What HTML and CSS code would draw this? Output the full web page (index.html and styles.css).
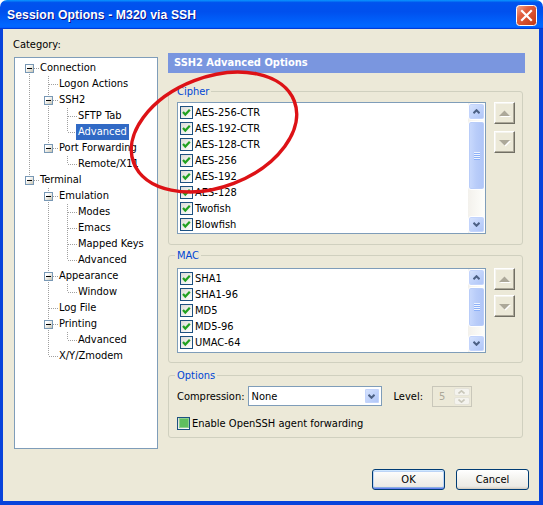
FILE: index.html
```html
<!DOCTYPE html>
<html>
<head>
<meta charset="utf-8">
<link rel="stylesheet" href="styles.css">
</head>
<body>
<div class="window">
  <div class="titlebar">
    <span class="title">Session Options - M320 via SSH</span>
    <span class="close">
      <svg width="21" height="21" viewBox="0 0 21 21">
        <defs>
          <linearGradient id="cg" x1="0" y1="0" x2="1" y2="1">
            <stop offset="0" stop-color="#F3AC94"/>
            <stop offset=".35" stop-color="#E2603F"/>
            <stop offset="1" stop-color="#C23613"/>
          </linearGradient>
        </defs>
        <rect x=".5" y=".5" width="20" height="20" rx="3" fill="url(#cg)" stroke="#fff"/>
        <path d="M6 6 L15 15 M15 6 L6 15" stroke="#fff" stroke-width="2.2" stroke-linecap="square"/>
      </svg>
    </span>
  </div>
  <div class="client">
    <div class="main">
      <div class="left">
        <div class="cat-label">Category:</div>
        <div class="tree">
          <div class="tr"><i class="c f"><b class="bx"></b></i><span class="lb">Connection</span></div>
          <div class="tr"><i class="c v"></i><i class="c t"></i><span class="lb">Logon Actions</span></div>
          <div class="tr"><i class="c v"></i><i class="c t"><b class="bx"></b></i><span class="lb">SSH2</span></div>
          <div class="tr"><i class="c v"></i><i class="c v"></i><i class="c t"></i><span class="lb">SFTP Tab</span></div>
          <div class="tr"><i class="c v"></i><i class="c v"></i><i class="c l"></i><span class="lb sel">Advanced</span></div>
          <div class="tr"><i class="c v"></i><i class="c l"><b class="bx"></b></i><span class="lb">Port Forwarding</span></div>
          <div class="tr"><i class="c v"></i><i class="c"></i><i class="c l"></i><span class="lb">Remote/X11</span></div>
          <div class="tr"><i class="c l"><b class="bx"></b></i><span class="lb">Terminal</span></div>
          <div class="tr"><i class="c"></i><i class="c t"><b class="bx"></b></i><span class="lb">Emulation</span></div>
          <div class="tr"><i class="c"></i><i class="c v"></i><i class="c t"></i><span class="lb">Modes</span></div>
          <div class="tr"><i class="c"></i><i class="c v"></i><i class="c t"></i><span class="lb">Emacs</span></div>
          <div class="tr"><i class="c"></i><i class="c v"></i><i class="c t"></i><span class="lb">Mapped Keys</span></div>
          <div class="tr"><i class="c"></i><i class="c v"></i><i class="c l"></i><span class="lb">Advanced</span></div>
          <div class="tr"><i class="c"></i><i class="c t"><b class="bx"></b></i><span class="lb">Appearance</span></div>
          <div class="tr"><i class="c"></i><i class="c v"></i><i class="c l"></i><span class="lb">Window</span></div>
          <div class="tr"><i class="c"></i><i class="c t"></i><span class="lb">Log File</span></div>
          <div class="tr"><i class="c"></i><i class="c t"><b class="bx"></b></i><span class="lb">Printing</span></div>
          <div class="tr"><i class="c"></i><i class="c v"></i><i class="c l"></i><span class="lb">Advanced</span></div>
          <div class="tr"><i class="c"></i><i class="c l"></i><span class="lb">X/Y/Zmodem</span></div>
        </div>
      </div>
      <div class="right">
        <div class="header">SSH2 Advanced Options</div>

        <fieldset class="group cipher">
          <legend>Cipher</legend>
          <div class="listrow">
            <div class="list cipher-list">
              <div class="items">
                <div class="item"><span class="cb on"><svg viewBox="0 0 11 11"><polyline points="2,5 4.3,7.6 8.8,2.8"/></svg></span>AES-256-CTR</div>
                <div class="item"><span class="cb on"><svg viewBox="0 0 11 11"><polyline points="2,5 4.3,7.6 8.8,2.8"/></svg></span>AES-192-CTR</div>
                <div class="item"><span class="cb on"><svg viewBox="0 0 11 11"><polyline points="2,5 4.3,7.6 8.8,2.8"/></svg></span>AES-128-CTR</div>
                <div class="item"><span class="cb on"><svg viewBox="0 0 11 11"><polyline points="2,5 4.3,7.6 8.8,2.8"/></svg></span>AES-256</div>
                <div class="item"><span class="cb on"><svg viewBox="0 0 11 11"><polyline points="2,5 4.3,7.6 8.8,2.8"/></svg></span>AES-192</div>
                <div class="item"><span class="cb on"><svg viewBox="0 0 11 11"><polyline points="2,5 4.3,7.6 8.8,2.8"/></svg></span>AES-128</div>
                <div class="item"><span class="cb on"><svg viewBox="0 0 11 11"><polyline points="2,5 4.3,7.6 8.8,2.8"/></svg></span>Twofish</div>
                <div class="item"><span class="cb on"><svg viewBox="0 0 11 11"><polyline points="2,5 4.3,7.6 8.8,2.8"/></svg></span>Blowfish</div>
              </div>
              <div class="sb">
                <div class="sbb"><svg width="7" height="5" viewBox="0 0 7 5"><polyline points="0.5,4.2 3.5,1.2 6.5,4.2"/></svg></div>
                <div class="thumb thumb-cipher"><i class="grip"></i></div>
                <div class="track"></div>
                <div class="sbb"><svg width="7" height="5" viewBox="0 0 7 5"><polyline points="0.5,0.8 3.5,3.8 6.5,0.8"/></svg></div>
              </div>
            </div>
            <div class="movers">
              <div class="mv"><svg width="11" height="7" viewBox="0 0 11 7"><polygon points="0,6 5.5,0.5 11,6" fill="#ACA899"/></svg></div>
              <div class="mv"><svg width="11" height="7" viewBox="0 0 11 7"><polygon points="0,1 5.5,6.5 11,1" fill="#ACA899"/></svg></div>
            </div>
          </div>
        </fieldset>

        <fieldset class="group mac">
          <legend>MAC</legend>
          <div class="listrow">
            <div class="list mac-list">
              <div class="items">
                <div class="item"><span class="cb on"><svg viewBox="0 0 11 11"><polyline points="2,5 4.3,7.6 8.8,2.8"/></svg></span>SHA1</div>
                <div class="item"><span class="cb on"><svg viewBox="0 0 11 11"><polyline points="2,5 4.3,7.6 8.8,2.8"/></svg></span>SHA1-96</div>
                <div class="item"><span class="cb on"><svg viewBox="0 0 11 11"><polyline points="2,5 4.3,7.6 8.8,2.8"/></svg></span>MD5</div>
                <div class="item"><span class="cb on"><svg viewBox="0 0 11 11"><polyline points="2,5 4.3,7.6 8.8,2.8"/></svg></span>MD5-96</div>
                <div class="item"><span class="cb on"><svg viewBox="0 0 11 11"><polyline points="2,5 4.3,7.6 8.8,2.8"/></svg></span>UMAC-64</div>
              </div>
              <div class="sb">
                <div class="sbb"><svg width="7" height="5" viewBox="0 0 7 5"><polyline points="0.5,4.2 3.5,1.2 6.5,4.2"/></svg></div>
                <div class="thumb thumb-mac"><i class="grip"></i></div>
                <div class="track"></div>
                <div class="sbb"><svg width="7" height="5" viewBox="0 0 7 5"><polyline points="0.5,0.8 3.5,3.8 6.5,0.8"/></svg></div>
              </div>
            </div>
            <div class="movers movers-mac">
              <div class="mv"><svg width="11" height="7" viewBox="0 0 11 7"><polygon points="0,6 5.5,0.5 11,6" fill="#ACA899"/></svg></div>
              <div class="mv"><svg width="11" height="7" viewBox="0 0 11 7"><polygon points="0,1 5.5,6.5 11,1" fill="#ACA899"/></svg></div>
            </div>
          </div>
        </fieldset>

        <fieldset class="group options">
          <legend>Options</legend>
          <div class="optrow">
            <span class="optlabel">Compression:</span>
            <div class="combo">
              <span class="combo-text">None</span>
              <span class="combo-btn"><svg width="7" height="5" viewBox="0 0 7 5"><polyline points="0.5,0.8 3.5,3.8 6.5,0.8"/></svg></span>
            </div>
            <span class="optlabel level">Level:</span>
            <div class="spin">
              <span class="spin-text">5</span>
              <span class="spin-btns">
                <span class="spb"><svg width="7" height="4" viewBox="0 0 7 4"><polyline points="0.5,3.5 3.5,0.8 6.5,3.5"/></svg></span>
                <span class="spb"><svg width="7" height="4" viewBox="0 0 7 4"><polyline points="0.5,0.5 3.5,3.2 6.5,0.5"/></svg></span>
              </span>
            </div>
          </div>
          <div class="checkrow">
            <span class="cb mixed"></span>
            <span>Enable OpenSSH agent forwarding</span>
          </div>
        </fieldset>
      </div>
    </div>
    <div class="buttons">
      <button class="btn default">OK</button>
      <button class="btn">Cancel</button>
    </div>
  </div>
  <svg class="annot" width="543" height="505" viewBox="0 0 543 505">
    <ellipse cx="214" cy="132" rx="86" ry="55" transform="rotate(-21 214 132)" fill="none" stroke="#DD1216" stroke-width="3.5"/>
  </svg>
</div>
</body>
</html>
```

FILE: styles.css
```css
* { box-sizing: border-box; }

html, body {
  margin: 0;
  padding: 0;
  background: #ffffff;
}

body {
  font-family: "DejaVu Sans Condensed", "Liberation Sans", sans-serif;
  font-size: 11px;
  color: #000;
}

.window {
  position: relative;
  width: 543px;
  height: 505px;
  display: flex;
  flex-direction: column;
}

/* ---------- title bar ---------- */
.titlebar {
  height: 29px;
  flex: none;
  border-radius: 7px 7px 0 0;
  background: linear-gradient(180deg, #0997ff 0, #0053ee 9%, #0050ee 40%, #0066ff 86%, #0066ff 92%, #005bff 95%, #003dd7 97%, #003dd7 100%);
  display: flex;
  align-items: center;
  justify-content: space-between;
  padding: 0 6px 0 7px;
}

.title {
  font-family: "Liberation Sans", sans-serif;
  font-weight: bold;
  font-size: 12.2px;
  color: #fff;
  text-shadow: 1px 1px #0f1089;
  letter-spacing: 0.1px;
}

.close {
  width: 21px;
  height: 21px;
  display: block;
  margin-top: 1px;
}
.close svg { display: block; }

/* ---------- client ---------- */
.client {
  flex: 1;
  background: #ECE9D8;
  border-style: solid;
  border-color: #0843DB;
  border-width: 0 4px 4px 3px;
  padding: 9px 10px 0 11px;
  display: flex;
  flex-direction: column;
}

.main {
  display: flex;
  gap: 10px;
  align-items: flex-start;
}

.left { width: 144px; flex: none; }

.cat-label {
  line-height: 13px;
  height: 13px;
  margin-left: -1px;
}

.tree {
  margin-top: 6px;
  height: 392px;
  background: #fff;
  border: 1px solid #7F9DB9;
  padding: 2px 0 0 5px;
}

.tr {
  display: flex;
  height: 16px;
  align-items: flex-start;
}

.c {
  --dv: repeating-linear-gradient(180deg, #A0A0A0 0 1px, transparent 1px 2px);
  --dh: repeating-linear-gradient(90deg, #A0A0A0 0 1px, transparent 1px 2px);
  width: 19px;
  height: 16px;
  flex: none;
  display: flex;
  justify-content: center;
  align-items: flex-start;
}
.c.v { background: var(--dv) 9px 0 / 1px 16px no-repeat; }
.c.t { background: var(--dv) 9px 0 / 1px 16px no-repeat, var(--dh) 10px 8px / 9px 1px no-repeat; }
.c.l { background: var(--dv) 9px 0 / 1px 8px no-repeat, var(--dh) 10px 8px / 9px 1px no-repeat; }
.c.f { background: var(--dv) 9px 8px / 1px 8px no-repeat, var(--dh) 10px 8px / 9px 1px no-repeat; }

.bx {
  width: 9px;
  height: 9px;
  margin-top: 4px;
  border: 1px solid #7898B5;
  background: linear-gradient(135deg, #ffffff 25%, #E0DED4 70%, #C6C3B3);
  display: flex;
  align-items: center;
  justify-content: center;
}
.bx::before {
  content: "";
  width: 5px;
  height: 1px;
  background: #000;
}

.lb {
  line-height: 16px;
  height: 16px;
  padding: 0 2px;
  margin-left: -1px;
  white-space: nowrap;
}
.lb.sel {
  background: #316AC5;
  color: #fff;
}

/* ---------- right side ---------- */
.right {
  width: 357px;
  flex: none;
  padding-top: 15px;
}

.header {
  height: 20px;
  line-height: 20px;
  background: #7A96DF;
  color: #fff;
  font-weight: bold;
  font-size: 11px;
  padding-left: 6px;
}

.group {
  margin: 0 2px 0 0;
  border: 1px solid #D0D0BF;
  border-radius: 3px;
  min-width: 0;
}
.group legend {
  color: #0046D5;
  line-height: 13px;
  padding: 0 2px;
  margin-left: -2px;
}

.cipher { margin-top: 12px; padding: 4px 7px 10px 8px; }
.mac { margin-top: 4px; padding: 6px 7px 9px 8px; }
.options { margin-top: 6px; padding: 3px 7px 6px 8px; }

.listrow {
  display: flex;
  gap: 8px;
  align-items: flex-start;
}

.list {
  width: 309px;
  border: 1px solid #7F9DB9;
  background: #fff;
  display: flex;
}
.cipher-list { height: 132px; }
.mac-list { height: 85px; }

.items {
  flex: 1;
  padding: 1px 0 0 2px;
}

.item {
  height: 16px;
  display: flex;
  align-items: center;
  gap: 2px;
  white-space: nowrap;
}

.cb {
  width: 13px;
  height: 13px;
  flex: none;
  border: 1px solid #1C5180;
  background: linear-gradient(135deg, #DCDCD7, #FFFFFF);
  display: block;
}
.cb svg {
  display: block;
  width: 11px;
  height: 11px;
}
.cb polyline {
  fill: none;
  stroke: #21A121;
  stroke-width: 2.2;
}
.cb.mixed {
  display: flex;
  align-items: center;
  justify-content: center;
}
.cb.mixed::after {
  content: "";
  width: 8px;
  height: 8px;
  background: #5FBF5F;
  box-shadow: 0 0 0 1px #8FD08F;
}

/* scrollbar */
.sb {
  width: 17px;
  flex: none;
  display: flex;
  flex-direction: column;
  background: linear-gradient(90deg, #F3F1EC, #FEFEFB);
}
.sbb {
  height: 17px;
  flex: none;
  border: 1px solid #fff;
  border-radius: 3px;
  background: linear-gradient(135deg, #D9E5FE, #BDD0FA 60%, #AEC4F6);
  box-shadow: inset 0 0 0 1px #C3D4FC;
  display: flex;
  align-items: center;
  justify-content: center;
}
.sbb svg polyline, .combo-btn svg polyline {
  fill: none;
  stroke: #4D6185;
  stroke-width: 2;
}
.thumb {
  flex: none;
  border: 1px solid #fff;
  border-radius: 3px;
  background: linear-gradient(90deg, #CADAFD, #B8CCF9 50%, #AFC5F7);
  box-shadow: inset 0 0 0 1px #B9CDF9;
  display: flex;
  align-items: center;
  justify-content: center;
}
.thumb-cipher { height: 69px; margin-top: 1px; }
.thumb-mac { height: 40px; margin-top: 1px; }
.grip {
  width: 6px;
  height: 8px;
  background: repeating-linear-gradient(180deg, #EEF4FE 0 1px, #8CB0F8 1px 2px);
}
.track { flex: 1; }

/* mover buttons */
.movers {
  display: flex;
  flex-direction: column;
  gap: 7px;
}
.movers-mac { gap: 5px; }
.mv {
  width: 21px;
  height: 22px;
  background: #ECE9D8;
  border: 1px solid;
  border-color: #FFFFFF #716F64 #716F64 #FFFFFF;
  box-shadow: inset -1px -1px #ACA899, inset 1px 1px #F5F4EE;
  display: flex;
  align-items: center;
  justify-content: center;
}
.mv svg { display: block; filter: drop-shadow(1px 1px 0 #fff); }

/* options */
.optrow {
  display: flex;
  align-items: center;
  height: 22px;
}
.optlabel { white-space: nowrap; }
.combo {
  margin-left: 3px;
  width: 134px;
  height: 20px;
  border: 1px solid #7F9DB9;
  background: #fff;
  display: flex;
  align-items: center;
  justify-content: space-between;
  padding: 1px;
}
.combo-text { padding-left: 2px; }
.combo-btn {
  width: 16px;
  height: 16px;
  border: 1px solid #fff;
  border-radius: 2px;
  background: linear-gradient(135deg, #D9E5FE, #BDD0FA 60%, #AEC4F6);
  box-shadow: inset 0 0 0 1px #C3D4FC;
  display: flex;
  align-items: center;
  justify-content: center;
}
.level { margin-left: 12px; }
.spin {
  margin-left: 9px;
  width: 40px;
  height: 21px;
  border: 1px solid #C9C7BA;
  background: #ECE9D8;
  display: flex;
  justify-content: space-between;
  padding: 1px;
}
.spin-text {
  color: #ACA899;
  padding-left: 5px;
  line-height: 17px;
}
.spin-btns {
  width: 16px;
  display: flex;
  flex-direction: column;
  gap: 1px;
}
.spb {
  flex: 1;
  border: 1px solid #E5E3D9;
  border-radius: 2px;
  background: #F4F3EE;
  display: flex;
  align-items: center;
  justify-content: center;
}
.spb svg polyline {
  fill: none;
  stroke: #C9C7BA;
  stroke-width: 1.6;
}

.checkrow {
  margin-top: 8px;
  height: 16px;
  display: flex;
  align-items: center;
  gap: 2px;
}

/* bottom buttons */
.buttons {
  margin-top: 20px;
  display: flex;
  justify-content: flex-end;
  gap: 11px;
}
.btn {
  width: 73px;
  height: 21px;
  padding: 0;
  font: inherit;
  color: #000;
  border: 1px solid #003C74;
  border-radius: 3px;
  background: linear-gradient(180deg, #FFFFFF, #F3F2EE 50%, #ECEBE6 85%, #D6D0C5);
  box-shadow: inset 0 -1px #D6D0C5;
}
.btn.default {
  box-shadow: inset 0 1px #CEE7FF, inset 0 -1px #6982EE, inset 1px 0 #BCD4F6, inset -1px 0 #BCD4F6, inset 0 2px #BCD4F6, inset 0 -2px #89ADE4;
}

/* annotation */
.annot {
  position: absolute;
  left: 0;
  top: 0;
  pointer-events: none;
}
```
